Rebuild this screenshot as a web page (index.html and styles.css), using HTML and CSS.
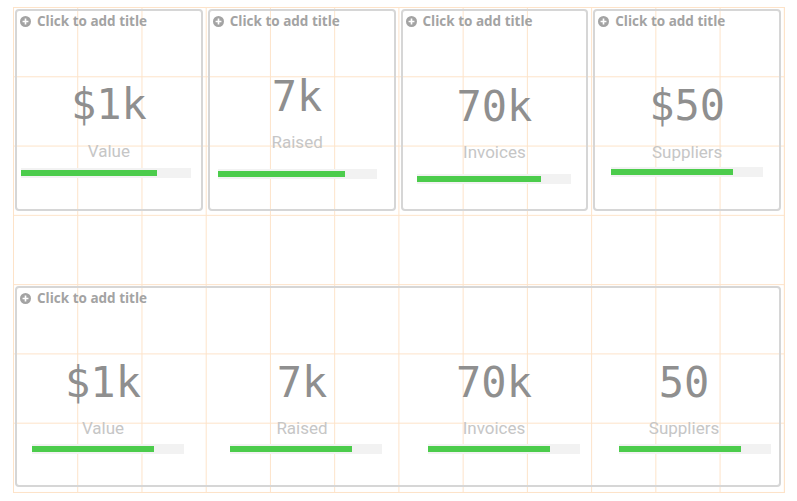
FILE: index.html
```html
<!DOCTYPE html>
<html lang="en">
<head>
  <meta charset="UTF-8">
  <title>KPI Sheet</title>
  <link rel="stylesheet" href="styles.css">
</head>
<body>

  <div class="sheet">

    <!-- Top row: single KPI objects -->
    <section class="card card-top">
      <header class="card-title">
        <svg class="add-icon" viewBox="0 0 12 12"><circle cx="6" cy="6" r="6"/><path d="M6 2.8v6.4M2.8 6h6.4"/></svg>
        <span>Click to add title</span>
      </header>
      <div class="kpi">
        <div class="kpi-value">$1k</div>
        <div class="kpi-label">Value</div>
        <div class="kpi-bar"><div class="kpi-fill" style="width: 80%"></div></div>
      </div>
    </section>

    <section class="card card-top">
      <header class="card-title">
        <svg class="add-icon" viewBox="0 0 12 12"><circle cx="6" cy="6" r="6"/><path d="M6 2.8v6.4M2.8 6h6.4"/></svg>
        <span>Click to add title</span>
      </header>
      <div class="kpi">
        <div class="kpi-value">7k</div>
        <div class="kpi-label">Raised</div>
        <div class="kpi-bar"><div class="kpi-fill" style="width: 80%"></div></div>
      </div>
    </section>

    <section class="card card-top">
      <header class="card-title">
        <svg class="add-icon" viewBox="0 0 12 12"><circle cx="6" cy="6" r="6"/><path d="M6 2.8v6.4M2.8 6h6.4"/></svg>
        <span>Click to add title</span>
      </header>
      <div class="kpi">
        <div class="kpi-value">70k</div>
        <div class="kpi-label">Invoices</div>
        <div class="kpi-bar"><div class="kpi-fill" style="width: 80%"></div></div>
      </div>
    </section>

    <section class="card card-top">
      <header class="card-title">
        <svg class="add-icon" viewBox="0 0 12 12"><circle cx="6" cy="6" r="6"/><path d="M6 2.8v6.4M2.8 6h6.4"/></svg>
        <span>Click to add title</span>
      </header>
      <div class="kpi">
        <div class="kpi-value">$50</div>
        <div class="kpi-label">Suppliers</div>
        <div class="kpi-bar"><div class="kpi-fill" style="width: 80%"></div></div>
      </div>
    </section>

    <!-- Bottom: multi KPI object -->
    <section class="card card-wide">
      <header class="card-title">
        <svg class="add-icon" viewBox="0 0 12 12"><circle cx="6" cy="6" r="6"/><path d="M6 2.8v6.4M2.8 6h6.4"/></svg>
        <span>Click to add title</span>
      </header>
      <div class="kpi-row">
        <div class="kpi">
          <div class="kpi-value">$1k</div>
          <div class="kpi-label">Value</div>
          <div class="kpi-bar"><div class="kpi-fill" style="width: 80%"></div></div>
        </div>
        <div class="kpi">
          <div class="kpi-value">7k</div>
          <div class="kpi-label">Raised</div>
          <div class="kpi-bar"><div class="kpi-fill" style="width: 80%"></div></div>
        </div>
        <div class="kpi">
          <div class="kpi-value">70k</div>
          <div class="kpi-label">Invoices</div>
          <div class="kpi-bar"><div class="kpi-fill" style="width: 80%"></div></div>
        </div>
        <div class="kpi">
          <div class="kpi-value">50</div>
          <div class="kpi-label">Suppliers</div>
          <div class="kpi-bar"><div class="kpi-fill" style="width: 80%"></div></div>
        </div>
      </div>
    </section>

  </div>

</body>
</html>
```

FILE: styles.css
```css
/* General */
body {
  margin: 0;
  background: #ffffff;
  font-family: "Open Sans", "Liberation Sans", sans-serif;
}

/* Sheet with edit grid */
.sheet {
  display: grid;
  grid-template-columns: repeat(12, 1fr);
  grid-template-rows: repeat(7, 1fr);
  width: 771px;
  height: 485px;
  margin: 7px 0 0 13px;
  background-image:
    linear-gradient(to right, #fde3c9 1px, transparent 1px),
    linear-gradient(to bottom, #fde3c9 1px, transparent 1px);
  background-size: calc(100% / 12) calc(100% / 7);
  border-right: 1px solid #fde3c9;
  border-bottom: 1px solid #fde3c9;
}

/* Cards */
.card {
  display: flex;
  flex-direction: column;
  min-width: 0;
  margin: 2px 3px 4px 2px;
  border: 2px solid #d6d6d6;
  border-radius: 4px;
}

.card-top {
  grid-column: span 3;
  grid-row: 1 / span 3;
}

.card-wide {
  grid-column: 1 / -1;
  grid-row: 5 / span 3;
  margin-bottom: 5px;
}

/* Title */
.card-title {
  display: flex;
  align-items: center;
  gap: 6px;
  height: 16px;
  padding: 2px 3px 0;
  font-size: 13.5px;
  font-weight: 700;
  line-height: 16px;
  color: #a3a3a3;
  white-space: nowrap;
}

.add-icon {
  width: 11px;
  height: 11px;
  flex: none;
}

.add-icon circle {
  fill: #a3a3a3;
}

.add-icon path {
  stroke: #ffffff;
  stroke-width: 1.8;
}

/* KPI */
.kpi {
  display: flex;
  flex-direction: column;
  align-items: center;
}

.kpi-value {
  margin-top: 55px;
  font-family: "DejaVu Sans Mono", "Liberation Mono", monospace;
  font-size: 42px;
  line-height: 42px;
  color: #8f8f8f;
  white-space: nowrap;
}

.kpi-label {
  margin-top: 15px;
  font-family: Roboto, "Liberation Sans", sans-serif;
  font-size: 17px;
  line-height: 20px;
  color: #c6c6c6;
  white-space: nowrap;
}

.kpi-bar {
  display: flex;
  align-items: center;
  width: 170px;
  height: 10px;
  margin-top: 7px;
  background: #f2f2f2;
}

.kpi-fill {
  height: 6px;
  background: #4ccc4c;
}

/* Each single KPI is sized a little differently */
.card-top:nth-child(1) .kpi-bar { margin-right: 5px; }

.card-top:nth-child(2) .kpi { padding-right: 9px; }
.card-top:nth-child(2) .kpi-value { margin-top: 47px; }
.card-top:nth-child(2) .kpi-label { margin-top: 14px; }
.card-top:nth-child(2) .kpi-bar { width: 159px; margin-top: 17px; }

.card-top:nth-child(3) .kpi-value { margin-top: 57px; }
.card-top:nth-child(3) .kpi-label { margin-top: 14px; }
.card-top:nth-child(3) .kpi-bar { width: 154px; margin-top: 12px; }

.card-top:nth-child(4) .kpi-value { margin-top: 56px; }
.card-top:nth-child(4) .kpi-bar { width: 152px; margin-top: 5px; }

/* Multi KPI row */
.kpi-row {
  display: flex;
  gap: 46px;
  padding-left: 15px;
}

.kpi-row .kpi {
  width: 152px;
  --shift: 10px;
}

.kpi-row .kpi:nth-child(2) { --shift: 8px; }
.kpi-row .kpi:nth-child(3) { --shift: 20px; }
.kpi-row .kpi:nth-child(4) { --shift: 22px; margin-left: -7px; }

.kpi-row .kpi-value {
  margin-top: 56px;
  padding-right: var(--shift);
}

.kpi-row .kpi-label {
  margin-top: 14px;
  padding-right: var(--shift);
}

.kpi-row .kpi-bar {
  width: 100%;
  margin-top: 6px;
}
```
